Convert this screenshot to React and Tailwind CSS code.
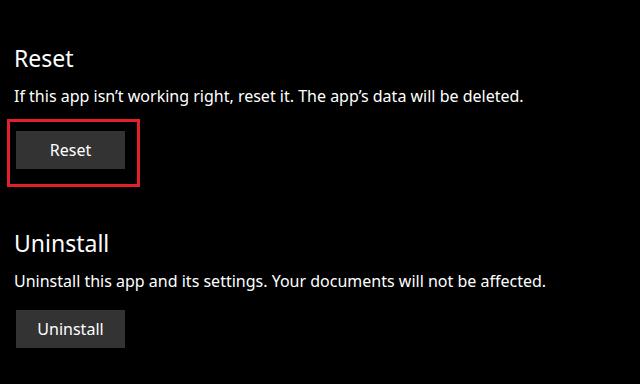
export default function App() {
  return (
    <div className="w-[640px] h-[384px] overflow-hidden bg-black text-white font-['Noto_Sans',sans-serif] pl-[14px] pt-[44px]">
      <section>
        <h2 className="text-[23px] leading-[28px] font-normal">Reset</h2>
        <p className="mt-[14px] text-[16px] leading-[20px]">
          If this app isn’t working right, reset it. The app’s data will be deleted.
        </p>
        <div className="relative mt-[25px] ml-[2px] w-[109px]">
          <button className="w-[109px] h-[38px] bg-[#333333] text-[16px] text-white">Reset</button>
          <div className="absolute left-[-9px] top-[-12px] w-[133px] h-[68px] border-[3px] border-[#e3212b] pointer-events-none" />
        </div>
      </section>
      <section className="mt-[60px]">
        <h2 className="text-[23px] leading-[28px] font-normal">Uninstall</h2>
        <p className="mt-[14px] text-[16px] leading-[20px]">
          Uninstall this app and its settings. Your documents will not be affected.
        </p>
        <button className="mt-[19px] ml-[2px] w-[109px] h-[38px] bg-[#333333] text-[16px] text-white">Uninstall</button>
      </section>
    </div>
  );
}
